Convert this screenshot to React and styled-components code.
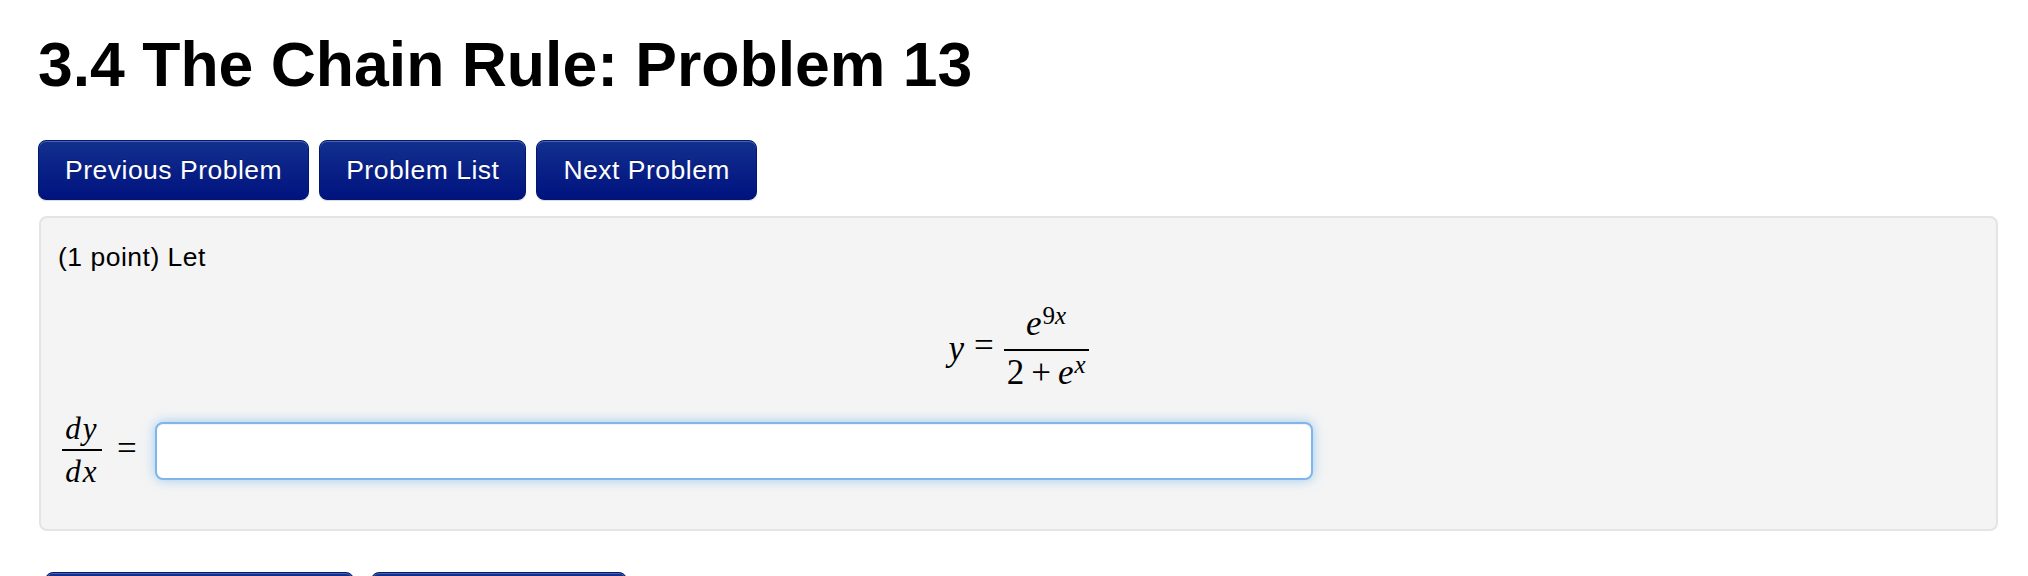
import styled, { createGlobalStyle } from "styled-components";

const GlobalStyle = createGlobalStyle`
    html, body {
        margin: 0;
        padding: 0;
        background: #ffffff;
    }

    body {
        font-family: "Liberation Sans", Arial, sans-serif;
        color: #000000;
        overflow: hidden;
    }
`

export default function App() {
    return (
        <Page>
            <GlobalStyle />
            <Title>3.4 The Chain Rule: Problem 13</Title>

            <ButtonRow>
                <NavButton>Previous Problem</NavButton>
                <NavButton>Problem List</NavButton>
                <NavButton>Next Problem</NavButton>
            </ButtonRow>

            <ProblemBox>
                <Intro>(1 point) Let</Intro>

                <Display>
                    <Var>y</Var>
                    <Rel>=</Rel>
                    <Fraction>
                        <Num>
                            <Var>e</Var>
                            <Sup>9<Var>x</Var></Sup>
                        </Num>
                        <Bar />
                        <Den>
                            2<Op>+</Op><Var>e</Var>
                            <Sup><Var>x</Var></Sup>
                        </Den>
                    </Fraction>
                </Display>

                <AnswerRow>
                    <Derivative>
                        <SmallNum><Var>dy</Var></SmallNum>
                        <Bar />
                        <SmallDen><Var>dx</Var></SmallDen>
                    </Derivative>
                    <Equals>=</Equals>
                    <AnswerInput type="text" aria-label="answer" />
                </AnswerRow>
            </ProblemBox>

            {/* only the top edge of these shows in the frame */}
            <SubmitRow>
                <NavButton aria-label="Preview My Answers" $width={309} />
                <NavButton aria-label="Submit Answers" $width={256} />
            </SubmitRow>
        </Page>
    )
}

const Page = styled.div`
    width: 2028px;
    height: 576px;
    box-sizing: border-box;
    padding: 0 30px 0 38px;
    display: flex;
    flex-direction: column;
    overflow: hidden;
`

const Title = styled.h1`
    margin: 33px 0 0 0;
    font-size: 62.5px;
    line-height: 63px;
    font-weight: 700;
`

const ButtonRow = styled.div`
    display: flex;
    gap: 10px;
    margin-top: 44px;
    flex-shrink: 0;
`

const SubmitRow = styled(ButtonRow)`
    gap: 17px;
    margin: 41px 0 0 7px;
`

const NavButton = styled.button`
    height: 60px;
    width: ${props => props.$width ? `${props.$width}px` : "auto"};
    padding: 0 26px;
    box-sizing: border-box;
    border: 1px solid #03186d;
    border-radius: 8px;
    background: linear-gradient(to bottom, #12308f 0%, #0a2287 45%, #00137f 100%);
    box-shadow: inset 0 1px 0 rgba(255, 255, 255, 0.25), 0 1px 1px rgba(0, 0, 0, 0.15);
    color: #ffffff;
    font-family: "Liberation Sans", Arial, sans-serif;
    font-size: 26.5px;
    letter-spacing: 0.5px;
    text-shadow: 0 -1px 0 rgba(0, 0, 0, 0.25);
    white-space: nowrap;
    cursor: pointer;
    flex-shrink: 0;
`

const ProblemBox = styled.div`
    margin: 16px 0 0 1px;
    padding: 19px 17px 42px 17px;
    background-color: #f4f4f4;
    border: 2px solid #e4e4e4;
    border-radius: 8px;
    display: flex;
    flex-direction: column;
    flex-shrink: 0;
`

const Intro = styled.div`
    font-size: 26.5px;
    letter-spacing: 0.5px;
    line-height: 40px;
`

const Display = styled.div`
    margin-top: 29px;
    display: flex;
    justify-content: center;
    align-items: center;
    font-family: "Liberation Serif", "Times New Roman", serif;
    font-size: 35px;
    line-height: 35px;
`

const Var = styled.span`
    font-style: italic;
`

const Rel = styled.span`
    margin: 0 10px;
    position: relative;
    top: -3px;
`

const Op = styled.span`
    margin: 0 7px;
`

const Fraction = styled.span`
    display: inline-flex;
    flex-direction: column;
    align-items: stretch;
    text-align: center;
`

const Num = styled.span`
    display: block;
    margin-bottom: 8px;
    padding: 0 3px;
    white-space: nowrap;
`

const Den = styled.span`
    display: block;
    margin-top: 4px;
    padding: 0 3px;
    white-space: nowrap;
`

const Sup = styled.span`
    font-size: 25px;
    line-height: 0;
    vertical-align: 11px;
    margin-left: 1px;
`

const Bar = styled.span`
    display: block;
    height: 2px;
    background-color: #000000;
`

const AnswerRow = styled.div`
    margin-top: 24px;
    display: flex;
    align-items: center;
    font-family: "Liberation Serif", "Times New Roman", serif;
`

const Derivative = styled(Fraction)`
    margin-left: 4px;
    width: 40px;
    font-size: 31px;
    line-height: 30px;
`

const SmallNum = styled.span`
    display: block;
    margin-bottom: 5px;
    letter-spacing: 2px;
`

const SmallDen = styled.span`
    display: block;
    margin-top: 6px;
    letter-spacing: 2px;
`

const Equals = styled.span`
    margin: 0 18px 0 15px;
    font-size: 35px;
    line-height: 35px;
    position: relative;
    top: -2px;
`

const AnswerInput = styled.input`
    width: 1158px;
    height: 58px;
    box-sizing: border-box;
    padding: 0 14px;
    border: 2px solid #80b5ea;
    border-radius: 8px;
    background-color: #ffffff;
    box-shadow: inset 0 1px 1px rgba(0, 0, 0, 0.05), 0 0 12px rgba(82, 168, 236, 0.55);
    font-family: "Liberation Sans", Arial, sans-serif;
    font-size: 26px;
    outline: none;
`
